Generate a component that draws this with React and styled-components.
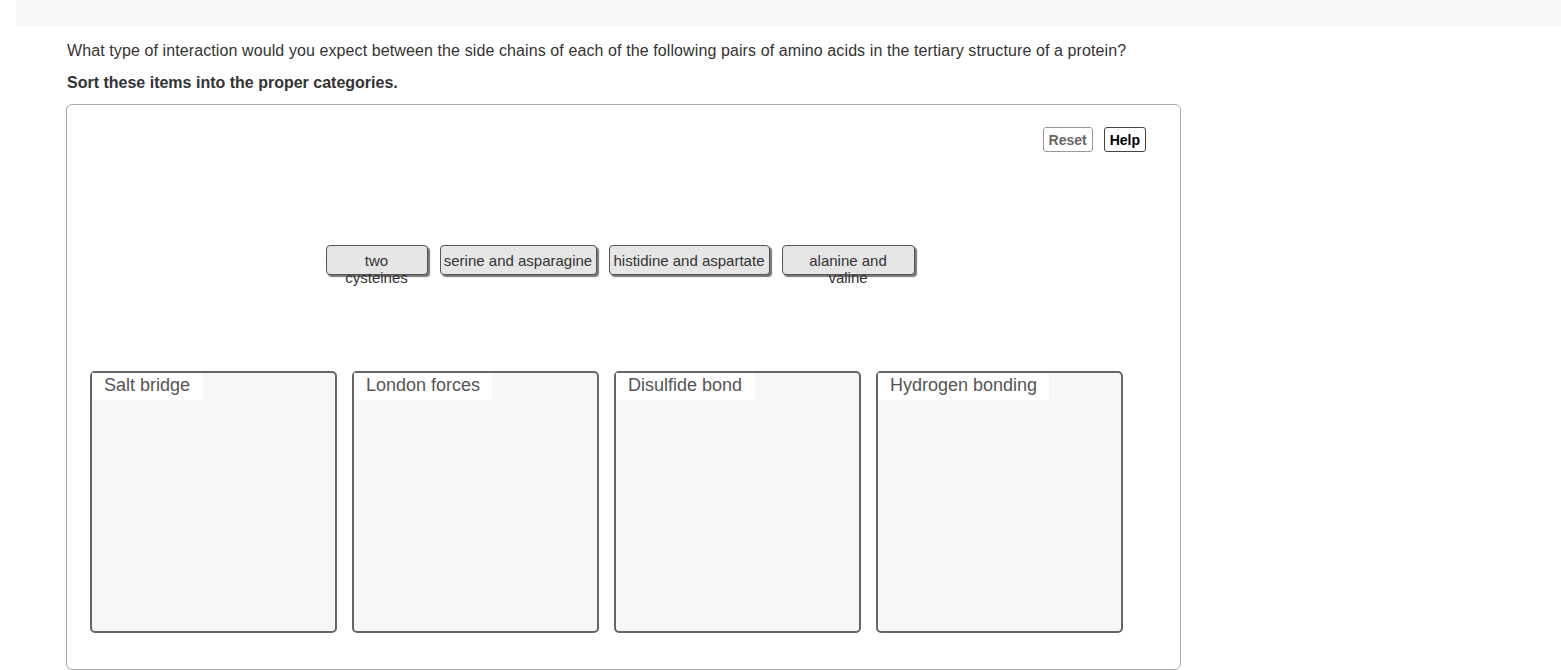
import React from 'react'
import styled, { createGlobalStyle } from 'styled-components'

const Global = createGlobalStyle`
  body {
    margin: 0;
    background: #fff;
    font-family: "Liberation Sans", Arial, sans-serif;
    color: #333;
  }
`

const TopBar = styled.div`
  margin-left: 16px;
  height: 26px;
  background: #f8f8f8;
`

const Content = styled.div`
  padding-left: 66px;
`

const Question = styled.p`
  margin: 16px 0 0 1px;
  font-size: 16px;
  letter-spacing: 0.1px;
  line-height: 18px;
  color: #333;
`

const Instruction = styled.p`
  margin: 14px 0 12px 1px;
  font-size: 16px;
  line-height: 18px;
  font-weight: bold;
  color: #333;
`

const Board = styled.div`
  box-sizing: border-box;
  width: 1115px;
  height: 566px;
  border: 1px solid #aaa;
  border-radius: 6px;
  padding: 22px 34px 0 23px;
`

const Toolbar = styled.div`
  display: flex;
  justify-content: flex-end;
  gap: 11px;
`

const ToolButton = styled.button`
  box-sizing: border-box;
  height: 25px;
  padding: 0 5px;
  background: #fff;
  border: 1px solid ${p => (p.$active ? '#444' : '#999')};
  border-radius: 3px;
  font-family: "Liberation Sans", Arial, sans-serif;
  font-size: 14px;
  font-weight: bold;
  color: ${p => (p.$active ? '#000' : '#666')};
`

const Pool = styled.div`
  display: flex;
  justify-content: center;
  gap: 12px;
  margin-top: 93px;
  padding-left: 4px;
`

const Token = styled.div`
  box-sizing: border-box;
  width: ${p => p.$w}px;
  height: 30px;
  padding: 6px ${p => (p.$wrap ? '12px' : '2px')} 0;
  background: #e6e6e6;
  border: 1px solid #555;
  border-radius: 4px;
  box-shadow: 2px 2px 1px #777;
  font-size: 15px;
  line-height: 17px;
  text-align: center;
  white-space: ${p => (p.$wrap ? 'normal' : 'nowrap')};
  color: #333;
`

const Bins = styled.div`
  display: flex;
  gap: 15px;
  margin-top: 96px;
`

const Bin = styled.div`
  box-sizing: border-box;
  width: 247px;
  height: 262px;
  background: #f7f7f7;
  border: 2px solid #666;
  border-radius: 5px;
  display: flex;
  align-items: flex-start;
`

const BinLabel = styled.div`
  padding: 2px 12px 4px;
  background: #fff;
  font-size: 18px;
  line-height: 21px;
  color: #555;
`

const tokens = [
  { text: 'two cysteines', w: 102, wrap: true },
  { text: 'serine and asparagine', w: 157 },
  { text: 'histidine and aspartate', w: 161 },
  { text: 'alanine and valine', w: 133, wrap: true },
]

const bins = ['Salt bridge', 'London forces', 'Disulfide bond', 'Hydrogen bonding']

const App = () => {
  return (
    <>
      <Global />
      <TopBar />
      <Content>
        <Question>
          What type of interaction would you expect between the side chains of each of the following pairs of amino acids in the tertiary structure of a protein?
        </Question>
        <Instruction>Sort these items into the proper categories.</Instruction>
        <Board>
          <Toolbar>
            <ToolButton>Reset</ToolButton>
            <ToolButton $active>Help</ToolButton>
          </Toolbar>
          <Pool>
            {tokens.map((t) => (
              <Token key={t.text} $w={t.w} $wrap={t.wrap}>{t.text}</Token>
            ))}
          </Pool>
          <Bins>
            {bins.map((b) => (
              <Bin key={b}>
                <BinLabel>{b}</BinLabel>
              </Bin>
            ))}
          </Bins>
        </Board>
      </Content>
    </>
  )
}

export default App
